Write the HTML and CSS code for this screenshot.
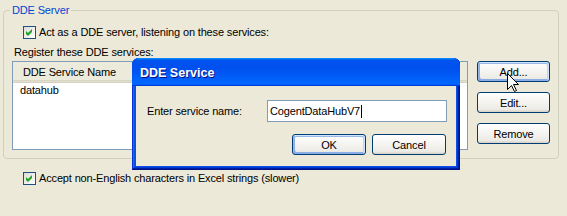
FILE: index.html
```html
<!DOCTYPE html>
<html>
<head>
<meta charset="utf-8">
<link rel="stylesheet" href="styles.css">
</head>
<body>
<div class="page">
  <fieldset class="group">
    <legend>DDE Server</legend>
    <div class="inner">
      <div class="check"><span class="box"><svg width="7" height="7" viewBox="0 0 7 7"><path d="M0 2 L2 4 L6 0 L6 3 L2 7 L0 5 Z" fill="#21A121"/></svg></span><span>Act as a DDE server, listening on these services:</span></div>
      <div class="sublabel">Register these DDE services:</div>
      <div class="services">
        <div class="list">
          <div class="list-header"><span class="col">DDE Service Name</span></div>
          <div class="list-row">datahub</div>
        </div>
        <div class="btn-col">
          <div class="btn default">Add...</div>
          <div class="btn">Edit...</div>
          <div class="btn">Remove</div>
        </div>
      </div>
    </div>
  </fieldset>
  <div class="check bottom"><span class="box"><svg width="7" height="7" viewBox="0 0 7 7"><path d="M0 2 L2 4 L6 0 L6 3 L2 7 L0 5 Z" fill="#21A121"/></svg></span><span>Accept non-English characters in Excel strings (slower)</span></div>
</div>

<div class="dialog">
  <div class="titlebar">DDE Service</div>
  <div class="client">
    <div class="field-row">
      <span class="field-label">Enter service name:</span>
      <div class="textbox">CogentDataHubV7<span class="caret"></span></div>
    </div>
    <div class="dlg-buttons">
      <div class="btn default">OK</div>
      <div class="btn">Cancel</div>
    </div>
  </div>
</div>

<svg class="cursor" width="13" height="20" viewBox="0 0 13 20"><path d="M0.5 0.5 L0.5 16.5 L4.5 12.5 L7.5 18.5 L9.5 17.5 L6.5 11.5 L11.5 11.5 Z" fill="#fff" stroke="#000" stroke-width="1" stroke-linejoin="miter"/></svg>
</body>
</html>
```

FILE: styles.css
```css
* { box-sizing: border-box; }

body {
  margin: 0;
  width: 567px;
  height: 216px;
  background: #ECE9D8;
  font-family: "Liberation Sans", Arial, sans-serif;
  font-size: 11px;
  letter-spacing: -0.15px;
  color: #000;
  position: relative;
  overflow: hidden;
}

.page {
  padding: 4px 0 0 3px;
}

.group {
  margin: 0;
  width: 556px;
  border: 1px solid #D0D0BF;
  border-radius: 4px;
  padding: 0 0 8px 0;
  min-width: 0;
}

.group legend {
  margin-left: 6px;
  padding: 0 2px;
  color: #0046D5;
  line-height: 13px;
}

.inner {
  padding-top: 9px;
}

.check {
  display: flex;
  align-items: center;
  gap: 3px;
  height: 13px;
  line-height: 13px;
  margin-left: 19px;
}

.check.bottom {
  margin-top: 13px;
  margin-left: 20px;
}

.box {
  width: 13px;
  height: 13px;
  border: 1px solid #1C5180;
  background: linear-gradient(135deg, #DCDCD7, #FFFFFF);
  display: flex;
  align-items: center;
  justify-content: center;
}

.sublabel {
  margin: 7px 0 0 10px;
  line-height: 13px;
}

.services {
  display: flex;
  margin: 2px 0 0 8px;
}

.list {
  width: 456px;
  height: 89px;
  border: 1px solid #7F9DB9;
  background: #fff;
}

.list-header {
  height: 21px;
  background: #EBEADB;
  border-bottom: 1px solid #D6D2C2;
  box-shadow: inset 0 -1px #E2DECD, inset 0 -2px #D9D5C5;
  display: flex;
  align-items: center;
  padding-left: 10px;
}

.list-row {
  height: 14px;
  line-height: 14px;
  padding-left: 7px;
}

.btn-col {
  margin-left: 9px;
  display: flex;
  flex-direction: column;
  gap: 10px;
}

.btn {
  width: 73px;
  height: 21px;
  border: 1px solid #003C74;
  border-radius: 3px;
  background: linear-gradient(180deg, #FFFFFF, #ECEBE6 86%, #D6D0C5);
  display: flex;
  align-items: center;
  justify-content: center;
}

.btn.default {
  box-shadow: inset -1px 1px #CEE7FF, inset 1px 2px #98B8EA, inset -2px 2px #BCD4F6, inset 1px -1px #89ADE4, inset 2px -2px #89ADE4;
}

.dialog {
  position: absolute;
  left: 132px;
  top: 58px;
  width: 328px;
  height: 112px;
  background: #0B4FE3;
  border-radius: 7px 7px 0 0;
  box-shadow: inset -1px -1px #00138C, inset 1px 1px #0831D9, inset -2px -2px #001EA0, inset 2px 2px #166AEE, inset -3px -3px #003BDA, inset 3px 3px #0855DD;
  padding: 0 4px 4px 4px;
  display: flex;
  flex-direction: column;
}

.titlebar {
  height: 28px;
  margin: 0 -4px;
  padding: 1px 0 0 8px;
  border-radius: 7px 7px 0 0;
  background: linear-gradient(180deg, #0997FF, #0053EE 8%, #0050EE 40%, #0066FF 88%, #0066FF 93%, #005BFF 95%, #003DD7 96%, #003DD7);
  color: #fff;
  font-size: 12.5px;
  font-weight: bold;
  letter-spacing: 0;
  display: flex;
  align-items: center;
  text-shadow: 1px 1px #0F1089;
}

.client {
  flex: 1;
  background: #ECE9D8;
  padding: 14px 8px 0 11px;
}

.field-row {
  display: flex;
  align-items: center;
}

.field-label {
  width: 120px;
}

.textbox {
  width: 180px;
  height: 22px;
  border: 1px solid #7F9DB9;
  background: #fff;
  display: flex;
  align-items: center;
  padding-left: 2px;
}

.caret {
  width: 1px;
  height: 13px;
  background: #000;
  margin-left: 1px;
}

.dlg-buttons {
  display: flex;
  justify-content: flex-end;
  gap: 6px;
  margin: 12px 2px 0 0;
}

.dlg-buttons .btn {
  width: 74px;
}

.cursor {
  position: absolute;
  left: 507px;
  top: 73px;
}
```
